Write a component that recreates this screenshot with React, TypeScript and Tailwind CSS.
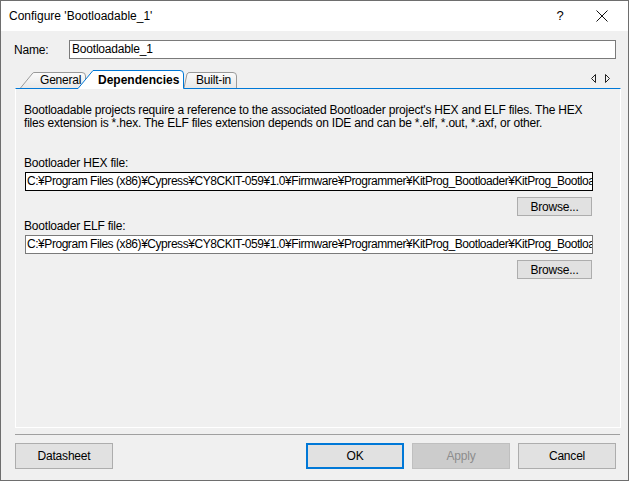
import React from "react";

const ui = { fontFamily: '"Liberation Sans", Arial, sans-serif' };

const hexPath =
  "C:¥Program Files (x86)¥Cypress¥CY8CKIT-059¥1.0¥Firmware¥Programmer¥KitProg_Bootloader¥KitProg_Bootloader.hex";
const elfPath =
  "C:¥Program Files (x86)¥Cypress¥CY8CKIT-059¥1.0¥Firmware¥Programmer¥KitProg_Bootloader¥KitProg_Bootloader.elf";

const Button: React.FC<{ label: string; className?: string; disabled?: boolean }> = ({
  label,
  className = "",
  disabled,
}) => (
  <button
    type="button"
    disabled={disabled}
    className={`flex items-center justify-center text-[12px] ${
      disabled ? "bg-[#cccccc] border border-[#bfbfbf] text-[#8d8d8d]" : "bg-[#e1e1e1] text-black"
    } ${className}`}
  >
    {label}
  </button>
);

const FileField: React.FC<{ label: string; value: string; focused?: boolean }> = ({
  label,
  value,
  focused,
}) => (
  <div className="flex flex-col">
    <div className="text-[12px] leading-[14px] text-black">{label}</div>
    <div
      className={`mt-[2px] ml-[1px] w-[568px] h-[19px] bg-white border ${
        focused ? "border-black" : "border-[#7a7a7a]"
      } overflow-hidden whitespace-nowrap text-[12px] leading-[17px] pl-[1px] tracking-[-0.45px] text-black`}
    >
      {value}
    </div>
    <div className="flex justify-end mt-[6px] pr-[1px] w-[569px]">
      <Button label="Browse..." className="w-[75px] h-[19px] border border-[#adadad]" />
    </div>
  </div>
);

const App: React.FC = () => {
  return (
    <div
      style={ui}
      className="w-[629px] h-[481px] border border-[#6e6e6e] bg-[#f0f0f0] flex flex-col text-black tracking-[-0.2px] select-none"
    >
      {/* title bar */}
      <div className="h-[30px] bg-white flex items-center pl-[8px] shrink-0">
        <span className="text-[12px] tracking-normal">Configure 'Bootloadable_1'</span>
        <span className="ml-auto text-[13px] w-[12px] text-center mr-[30px]">?</span>
        <svg width="12" height="12" viewBox="0 0 12 12" className="mr-[20px]">
          <path d="M0.5 0.5 L11.5 11.5 M11.5 0.5 L0.5 11.5" stroke="#111" strokeWidth="1" />
        </svg>
      </div>

      <div className="flex flex-col flex-1 px-[13px]">
        {/* name */}
        <div className="flex items-center mt-[9px] h-[19px]">
          <span className="text-[12px] w-[55px]">Name:</span>
          <div className="flex-1 h-[19px] bg-white border border-[#7a7a7a] text-[12px] leading-[17px] pl-[2px] mr-[-1px]">
            Bootloadable_1
          </div>
        </div>

        {/* tab strip */}
        <div className="flex items-end h-[18px] mt-[11px] pl-[6px] relative z-10">
          <div className="relative w-[66px] h-[16px]">
            <svg className="absolute inset-0" width="66" height="16" viewBox="0 0 66 16">
              <defs>
                <linearGradient id="g1" x1="0" y1="0" x2="0" y2="1">
                  <stop offset="0" stopColor="#fbfbfb" />
                  <stop offset="1" stopColor="#e8e8e8" />
                </linearGradient>
              </defs>
              <path
                d="M0.5 16 L13 0.8 Q13.6 0.5 15 0.5 H62 Q65.5 0.5 65.5 4 V16"
                fill="url(#g1)"
                stroke="#9a9a9a"
              />
            </svg>
            <span className="absolute left-[20px] top-[1px] text-[12px] leading-[14px]">General</span>
          </div>
          <div className="relative w-[106px] h-[19px] ml-[-8px] mb-[-1px] z-20">
            <svg className="absolute inset-0" width="106" height="19" viewBox="0 0 106 19">
              <path d="M0 18.5 L15 0.5 H102 Q105.5 0.5 105.5 4 V19 L0 19 Z" fill="#ffffff" />
              <path
                d="M0 18.5 L15 0.5 H102 Q105.5 0.5 105.5 4 V18.5"
                fill="none"
                stroke="#0078d7"
              />
            </svg>
            <span className="absolute left-[20px] top-[3px] text-[12px] leading-[14px] font-bold tracking-normal">
              Dependencies
            </span>
          </div>
          <div className="relative w-[54px] h-[16px] ml-[-1px]">
            <svg className="absolute inset-0" width="54" height="16" viewBox="0 0 54 16">
              <defs>
                <linearGradient id="g2" x1="0" y1="0" x2="0" y2="1">
                  <stop offset="0" stopColor="#fbfbfb" />
                  <stop offset="1" stopColor="#e8e8e8" />
                </linearGradient>
              </defs>
              <path
                d="M1 16 L4 2 Q4.5 0.5 7 0.5 H50 Q53.5 0.5 53.5 4 V16"
                fill="url(#g2)"
                stroke="#9a9a9a"
              />
            </svg>
            <span className="absolute left-[13px] top-[1px] text-[12px] leading-[14px]">Built-in</span>
          </div>
          <div className="ml-auto flex items-center gap-[9px] mr-[5px] self-center mt-[-2px]">
            <svg width="5" height="9" viewBox="0 0 5 9">
              <path d="M4.5 0.5 L0.5 4.5 L4.5 8.5 Z" fill="none" stroke="#222" />
            </svg>
            <svg width="5" height="9" viewBox="0 0 5 9">
              <path d="M0.5 0.5 L4.5 4.5 L0.5 8.5 Z" fill="none" stroke="#222" />
            </svg>
          </div>
        </div>

        {/* tab panel */}
        <div className="ml-[1px] w-[606px] h-[340px] border-t border-t-[#0078d7] border-x border-b border-x-white border-b-white pl-[8px] pt-[15px]">
          <p className="text-[12px] leading-[13px]">
            Bootloadable projects require a reference to the associated Bootloader project's HEX and ELF files. The HEX
            <br />
            files extension is *.hex. The ELF files extension depends on IDE and can be *.elf, *.out, *.axf, or other.
          </p>
          <div className="mt-[26px]">
            <FileField label="Bootloader HEX file:" value={hexPath} focused />
          </div>
          <div className="mt-[3px]">
            <FileField label="Bootloader ELF file:" value={elfPath} />
          </div>
        </div>

        {/* separator */}
        <div className="ml-[1px] w-[605px] mt-[6px] border-t border-[#a0a0a0]" />

        {/* buttons */}
        <div className="flex items-center mt-[8px] pl-[1px]">
          <Button label="Datasheet" className="w-[98px] h-[26px] border border-[#adadad]" />
          <div className="ml-auto flex gap-[8px] mr-[-1px]">
            <Button label="OK" className="w-[98px] h-[26px] border-2 border-[#0078d7]" />
            <Button label="Apply" disabled className="w-[98px] h-[26px]" />
            <Button label="Cancel" className="w-[98px] h-[26px] border border-[#adadad]" />
          </div>
        </div>
      </div>
    </div>
  );
};

export default App;
